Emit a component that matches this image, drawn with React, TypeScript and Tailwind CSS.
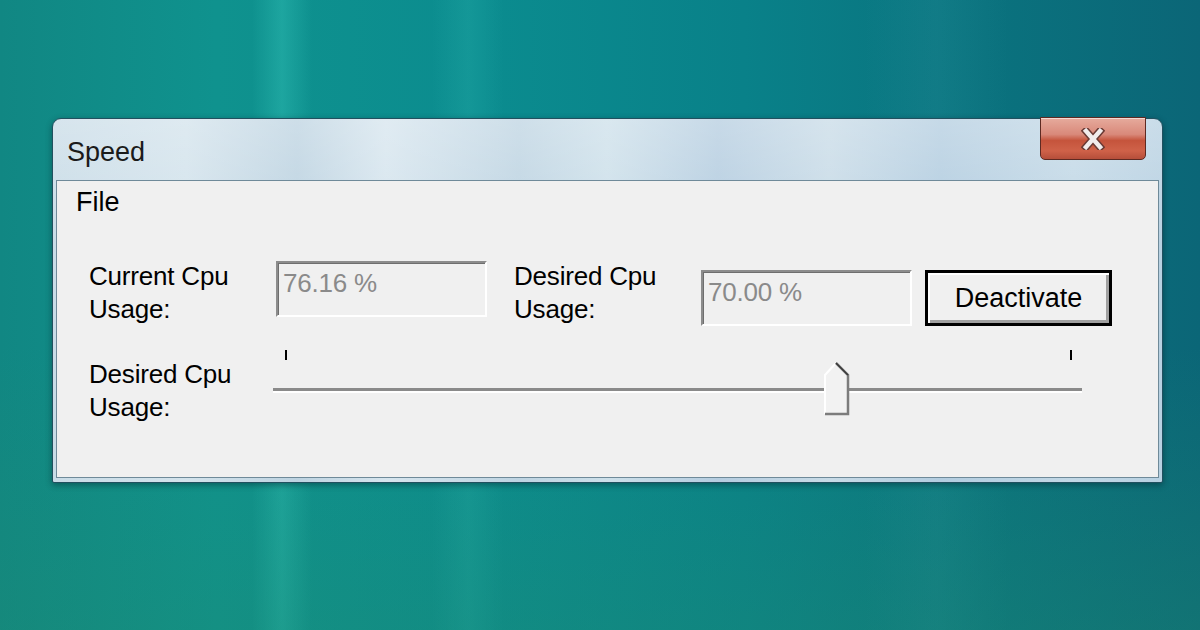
import React from 'react';

const font = "font-['Liberation_Sans',Arial,sans-serif]";

function CloseGlyph() {
  return (
    <svg width="24" height="22" viewBox="0 0 24 22" aria-hidden="true">
      <path d="M5 3 L19 19 M19 3 L5 19" stroke="#6a3a34" strokeWidth="7.5" strokeLinecap="square" />
      <path d="M5 3 L19 19 M19 3 L5 19" stroke="#f1ecec" strokeWidth="4.5" strokeLinecap="square" />
    </svg>
  );
}

function SliderThumb() {
  return (
    <svg width="26" height="54" viewBox="0 0 26 54" aria-hidden="true">
      <polygon points="1,13 12,1 24,13 24,52 1,52" fill="#f2f2f2" />
      <polyline points="1,52 1,13 12,1" fill="none" stroke="#ffffff" strokeWidth="2" />
      <polyline points="12,1 24,13 24,52 1,52" fill="none" stroke="#7c7c7c" strokeWidth="2.5" />
      <polyline points="12,1 24,13" fill="none" stroke="#3a3a3a" strokeWidth="1.5" />
    </svg>
  );
}

function ReadOnlyBox({ value, className }: { value: string; className?: string }) {
  return (
    <div
      className={`h-[56px] w-[211px] shrink-0 border-2 border-t-[#8c8c8c] border-l-[#8c8c8c] border-r-white border-b-white bg-[#f0f0f0] pl-[5px] pt-[4px] text-[26px] leading-[33px] tracking-[-0.2px] text-[#8a8a8a] shadow-[inset_1px_1px_0_#6e6e6e] ${className ?? ''}`}
    >
      {value}
    </div>
  );
}

function Label({ lines, className }: { lines: string[]; className?: string }) {
  return (
    <div className={`shrink-0 text-[26px] leading-[33px] tracking-[-0.2px] text-black ${className ?? ''}`}>
      {lines.map((l) => (
        <div key={l}>{l}</div>
      ))}
    </div>
  );
}

export default function App() {
  return (
    <div
      className={`${font} h-[630px] w-[1200px] overflow-hidden pl-[52px] pt-[118px] bg-[linear-gradient(180deg,rgba(0,0,0,0)_0%,rgba(0,0,0,0)_55%,rgba(30,140,110,0.35)_100%),linear-gradient(90deg,rgba(0,0,0,0)_21%,rgba(70,220,205,0.28)_23.5%,rgba(0,0,0,0)_26%,rgba(0,0,0,0)_36%,rgba(60,200,190,0.18)_39%,rgba(0,0,0,0)_42%,rgba(0,0,0,0)_72%,rgba(70,170,180,0.12)_78%,rgba(0,0,0,0)_84%),linear-gradient(90deg,#118783_0%,#0f928e_18%,#0b8c8f_40%,#098189_62%,#0a727e_82%,#0b6677_100%)]`}
    >
      {/* window */}
      <div className="flex h-[365px] w-[1111px] flex-col rounded-t-[9px] rounded-b-[2px] border border-[#22505f] bg-[linear-gradient(180deg,rgba(255,255,255,0.25)_0%,rgba(255,255,255,0)_35%),linear-gradient(90deg,#c9dce7_0%,#d3e3ec_12%,#bdd3e1_22%,#d6e5ee_30%,#bed4e2_42%,#cde0ea_50%,#b5cde0_60%,#c8dbe7_70%,#b3cde0_80%,#c2d8e6_92%,#b8d1e2_100%)] shadow-[0_2px_6px_rgba(0,30,40,0.45)]">
        {/* title bar */}
        <div className="flex h-[61px] shrink-0 items-start justify-between">
          <div className="pl-[14px] pt-[17px] text-[27px] leading-[33px] text-[#1b1b1b]">Speed</div>
          <div className="mr-[16px] mt-[-2px] flex h-[43px] w-[106px] items-center justify-center rounded-b-[5px] border border-[#5e2a22] bg-[linear-gradient(180deg,#e6ab9d_0%,#d9897a_40%,#c5543c_55%,#cf6249_80%,#b54e3a_100%)] shadow-[inset_0_1px_0_rgba(255,255,255,0.55)]">
            <CloseGlyph />
          </div>
        </div>

        {/* client area */}
        <div className="mx-[3px] h-[298px] shrink-0 border border-[#6f8a99] bg-[#f0f0f0] pt-[5px]">
          <div className="h-[33px] pl-[19px] text-[27px] leading-[33px] text-black">File</div>

          {/* row 1 */}
          <div className="mt-[41px] flex items-start pl-[32px]">
            <Label lines={['Current Cpu', 'Usage:']} className="w-[187px]" />
            <ReadOnlyBox value="76.16 %" className="mt-[1px]" />
            <Label lines={['Desired Cpu', 'Usage:']} className="ml-[27px] w-[187px]" />
            <ReadOnlyBox value="70.00 %" className="mt-[10px]" />
            <button className="ml-[13px] mt-[10px] flex h-[56px] w-[187px] shrink-0 items-center justify-center border-[3px] border-black bg-[#f0f0f0] text-[27px] leading-[33px] text-black shadow-[inset_2px_2px_0_#ffffff,inset_-3px_-3px_0_#a0a0a0]">
              Deactivate
            </button>
          </div>

          {/* row 2 */}
          <div className="mt-[24px] flex items-start pl-[32px]">
            <Label lines={['Desired Cpu', 'Usage:']} className="mt-[8px] w-[184px]" />
            <div className="relative h-[66px] w-[809px] shrink-0">
              <div className="flex justify-between pl-[12px] pr-[10px]">
                <div className="h-[10px] w-[2px] bg-black" />
                <div className="h-[10px] w-[2px] bg-black" />
              </div>
              <div className="mt-[28px] h-[3px] bg-[#8a8a8a]" />
              <div className="h-[2px] bg-white" />
              <div className="absolute left-[551px] top-[12px]">
                <SliderThumb />
              </div>
            </div>
          </div>
        </div>
      </div>
    </div>
  );
}
